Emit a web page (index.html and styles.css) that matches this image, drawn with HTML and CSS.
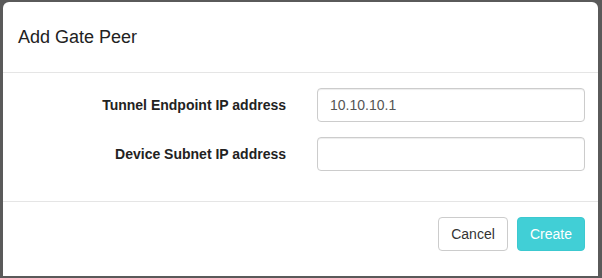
FILE: index.html
```html
<!DOCTYPE html>
<html lang="en">
<head>
    <meta charset="UTF-8">
    <meta name="viewport" content="width=device-width, initial-scale=1.0">
    <title>Add Gate Peer</title>
    <link rel="stylesheet" href="styles.css">
</head>
<body>
    <!-- Modal de novo peer -->
    <div class="modal">
        <div class="modal-header">
            <h4 class="modal-title">Add Gate Peer</h4>
        </div>
        <div class="modal-body">
            <div class="form-group">
                <label for="tunnel-ip">Tunnel Endpoint IP address</label>
                <input type="text" id="tunnel-ip" class="form-control" value="10.10.10.1">
            </div>
            <div class="form-group">
                <label for="subnet-ip">Device Subnet IP address</label>
                <input type="text" id="subnet-ip" class="form-control">
            </div>
        </div>
        <div class="modal-footer">
            <button class="btn btn-default">Cancel</button>
            <button class="btn btn-primary">Create</button>
        </div>
    </div>
</body>
</html>
```

FILE: styles.css
```css
body {
    font-family: "Liberation Sans", Arial, sans-serif;
    font-size: 14px;
    color: #333;
    margin: 0;
    height: 100vh;
    background-color: #5a5a5a;
    display: flex;
    flex-direction: column;
}

.modal {
    flex: 1;
    margin: 2px 4px 2px 3px;
    background-color: #fff;
    border-radius: 6px 6px 0 0;
    display: flex;
    flex-direction: column;
}

.modal-header {
    padding: 22px 15px;
    border-bottom: 1px solid #e5e5e5;
}

.modal-title {
    margin: 0;
    font-size: 18px;
    font-weight: normal;
    line-height: 26px;
    color: #222;
}

.modal-body {
    padding: 15px 13px 30px 15px;
}

.form-group {
    display: grid;
    grid-template-columns: 268px 268px;
    column-gap: 31px;
    align-items: center;
    margin-bottom: 15px;
}

.form-group:last-child {
    margin-bottom: 0;
}

.form-group label {
    font-weight: bold;
    text-align: right;
    color: #222;
}

.form-control {
    box-sizing: border-box;
    height: 34px;
    padding: 6px 12px;
    font-family: inherit;
    font-size: 14px;
    color: #555;
    border: 1px solid #ccc;
    border-radius: 4px;
    box-shadow: inset 0 1px 1px rgba(0, 0, 0, 0.075);
    outline: none;
}

.modal-footer {
    padding: 15px 13px;
    border-top: 1px solid #e5e5e5;
    display: flex;
    justify-content: flex-end;
    gap: 9px;
}

.btn {
    box-sizing: border-box;
    height: 34px;
    padding: 6px 12px;
    font-family: inherit;
    font-size: 14px;
    border: 1px solid transparent;
    border-radius: 4px;
    cursor: pointer;
}

.btn-default {
    width: 70px;
    background-color: #fff;
    border-color: #ccc;
    color: #333;
}

.btn-primary {
    width: 68px;
    background-color: #41cfd6;
    border-color: #3cc9d0;
    color: #fff;
}
```
